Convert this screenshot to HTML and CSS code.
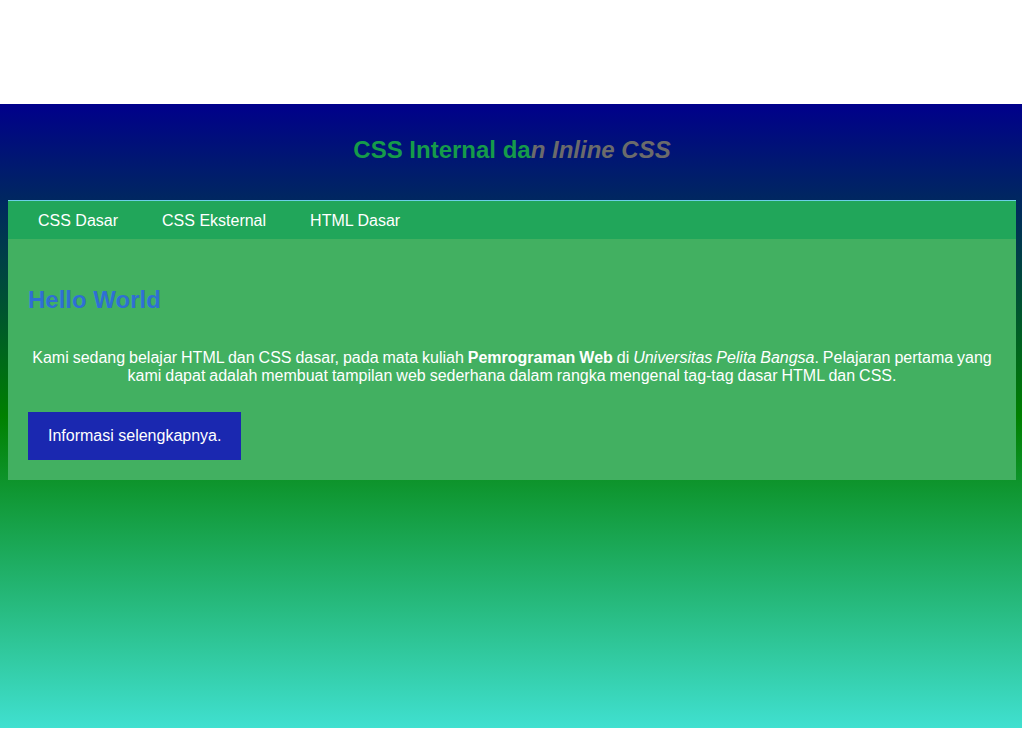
FILE: index.html
```html
<!DOCTYPE html>
<html lang="id">
<head>
<meta charset="utf-8">
<title>CSS Internal dan Inline CSS</title>
<link rel="stylesheet" href="styles.css">
</head>
<body>
<div class="page">
  <header class="header">
    <h1 class="title">CSS Internal da<span class="title-alt">n Inline CSS</span></h1>
  </header>
  <nav class="nav">
    <a class="nav-link" href="#">CSS Dasar</a>
    <a class="nav-link" href="#">CSS Eksternal</a>
    <a class="nav-link" href="#">HTML Dasar</a>
  </nav>
  <main class="content">
    <h2 class="hello">Hello World</h2>
    <p class="intro">Kami sedang belajar HTML dan CSS dasar, pada mata kuliah <b>Pemrograman Web</b> di <i>Universitas Pelita Bangsa</i>. Pelajaran pertama yang kami dapat adalah membuat tampilan web sederhana dalam rangka mengenal tag-tag dasar HTML dan CSS.</p>
    <a class="button" href="#">Informasi selengkapnya.</a>
  </main>
</div>
</body>
</html>
```
FILE: styles.css
```css
html {
  background: #ffffff;
}
body {
  margin: 0;
  padding-top: 104px;
  font-family: "Liberation Sans", Arial, sans-serif;
}
.page {
  height: 624px;
  box-sizing: border-box;
  padding: 0 6px 0 8px;
  background: linear-gradient(#00008b, #008000, #40e0d0);
}
.header {
  padding: 32px 0 36px;
}
.title {
  margin: 0;
  font-size: 24px;
  line-height: 28px;
  font-weight: bold;
  text-align: center;
  color: #169b4a;
}
.title-alt {
  font-style: italic;
  color: #6b6b6b;
}
.nav {
  display: flex;
  padding-left: 8px;
  background: #21a65a;
  border-top: 1px solid #6ccfe8;
}
.nav-link {
  padding: 11px 22px 9px;
  line-height: 18px;
  font-size: 16px;
  color: #ffffff;
  text-decoration: none;
}
.content {
  padding: 20px;
  background: #42b061;
  color: #ffffff;
}
.hello {
  margin: 27px 0 35px;
  font-size: 24px;
  line-height: 28px;
  color: #2f6fd4;
}
.intro {
  margin: 0 0 27px;
  font-size: 16px;
  line-height: 18px;
  text-align: center;
  word-spacing: -0.5px;
}
.button {
  display: inline-block;
  padding: 15px 20px;
  font-size: 16px;
  line-height: 18px;
  background: #1a28b0;
  color: #ffffff;
  text-decoration: none;
  vertical-align: top;
}
```
